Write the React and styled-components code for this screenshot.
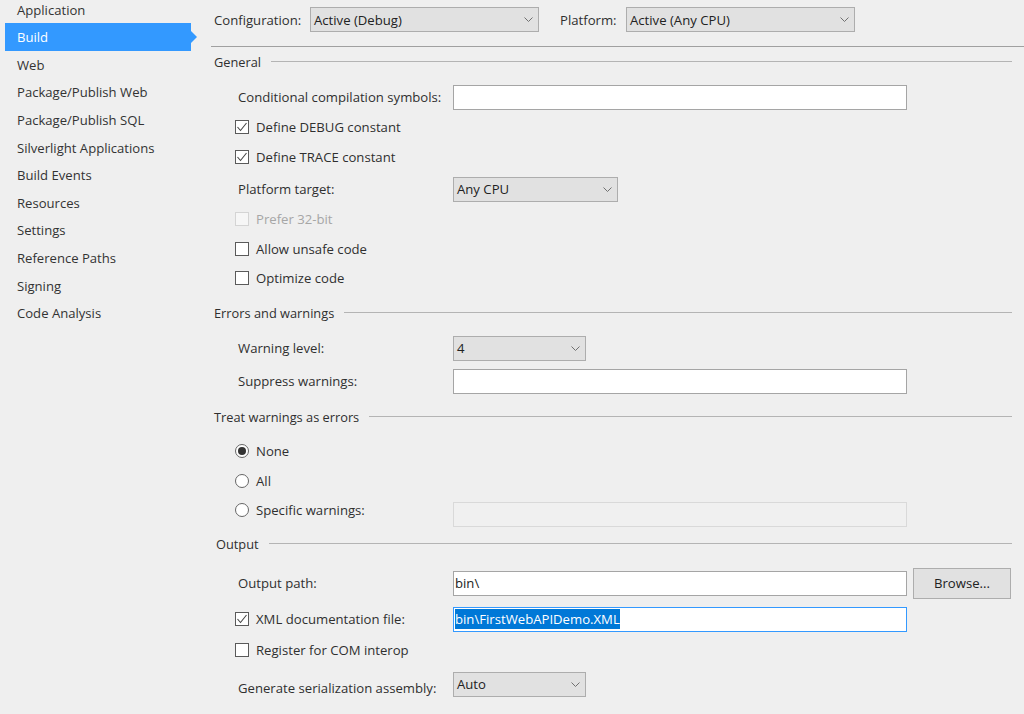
import React from 'react'
import styled, { createGlobalStyle } from 'styled-components'

const GlobalStyle = createGlobalStyle`
  html, body { margin: 0; padding: 0; background: #efefef; overflow: hidden; }
  body { font-family: "Open Sans", "Noto Sans", sans-serif; font-size: 13.15px; color: #2f2f2f; }
`

const Page = styled.div`
  display: flex;
  width: 1024px;
  height: 714px;
  overflow: hidden;
  background: #efefef;
`
const Sidebar = styled.nav`
  width: 211px;
  flex: none;
  padding: 0 0 0 5px;
  box-sizing: border-box;
  margin-top: -4.4px;
`
const NavItem = styled.div`
  position: relative;
  width: 186px;
  height: 27.6px;
  line-height: 29.4px;
  padding-left: 12px;
  box-sizing: border-box;
  font-size: 13.1px;
  background: ${p => (p.$active ? '#3399ff' : 'transparent')};
  color: ${p => (p.$active ? '#fff' : '#333')};
  ${p => p.$active && `
    &::after {
      content: '';
      position: absolute;
      left: 186px;
      top: 8px;
      border-left: 6px solid #3399ff;
      border-top: 6px solid transparent;
      border-bottom: 6px solid transparent;
    }
  `}
`
const Main = styled.main`
  flex: 1;
  min-width: 0;
`
const Toolbar = styled.div`
  display: flex;
  align-items: center;
  height: 47px;
  padding: 0 0 7px 3px;
  box-sizing: border-box;
  border-bottom: 1px solid #a0a0a0;
`
const ToolLabel = styled.span`
  width: ${p => p.$w}px;
  flex: none;
  margin-left: ${p => p.$ml || 0}px;
`
const SelectBox = styled.div`
  display: flex;
  align-items: center;
  justify-content: space-between;
  width: ${p => p.$w}px;
  height: 25px;
  margin-bottom: ${p => p.$lift || 0}px;
  padding: 0 5px 0 3px;
  box-sizing: border-box;
  background: #e1e1e1;
  border: 1px solid #adadad;
  color: #222;
  flex: none;
`
const Chevron = styled.svg`
  width: 9px;
  height: 5px;
  flex: none;
  fill: none;
  stroke: #707070;
  stroke-width: 1;
`
const SectionHead = styled.div`
  display: flex;
  align-items: center;
  height: 30px;
  margin-top: ${p => p.$gap || 0}px;
  padding-left: ${p => p.$indent || 3}px;
  width: 801px;
  box-sizing: border-box;
  font-size: 12.8px;
  &::after {
    content: '';
    flex: 1;
    height: 1px;
    margin-left: 10px;
    margin-top: -2px;
    background: #b4b4b4;
  }
`
const Row = styled.div`
  display: grid;
  grid-template-columns: 242px auto;
  grid-template-rows: 30px;
  align-items: center;
  height: 30px;
  margin-top: ${p => p.$gap || 0}px;
  color: ${p => (p.$muted ? '#a6a6a6' : 'inherit')};
`
const Label = styled.span`
  padding-left: 27px;
`
const CheckLabel = styled.span`
  display: flex;
  align-items: center;
  gap: 7px;
  padding-left: 24px;
  padding-bottom: ${p => p.$lift || 0}px;
  white-space: nowrap;
`
const CheckBox = styled.span`
  display: flex;
  align-items: center;
  justify-content: center;
  width: 14px;
  height: 14px;
  box-sizing: border-box;
  flex: none;
  background: ${p => (p.$disabled ? '#f6f6f6' : '#fff')};
  border: 1px solid ${p => (p.$disabled ? '#d4d4d4' : '#5a5a5a')};
`
const RadioDot = styled.span`
  display: flex;
  align-items: center;
  justify-content: center;
  width: 14px;
  height: 14px;
  box-sizing: border-box;
  flex: none;
  border-radius: 50%;
  background: #fff;
  border: 1px solid #666;
  &::after {
    content: '';
    display: ${p => (p.$on ? 'block' : 'none')};
    width: 8px;
    height: 8px;
    border-radius: 50%;
    background: #333;
  }
`
const TextField = styled.div`
  display: flex;
  align-items: center;
  width: 454px;
  height: 25px;
  padding-left: 1px;
  box-sizing: border-box;
  background: ${p => (p.$disabled ? '#f0f0f0' : '#fff')};
  border: 1px solid ${p => (p.$focus ? '#3399ff' : p.$disabled ? '#d9d9d9' : '#a5a5a5')};
  color: #222;
`
const Selected = styled.span`
  line-height: 20px;
  background: #0078d7;
  color: #fff;
`
const FieldGroup = styled.div`
  display: flex;
  align-items: center;
  gap: 6px;
`
const BrowseButton = styled.button`
  width: 98px;
  height: 31px;
  padding: 0;
  font: inherit;
  color: #222;
  background: #e1e1e1;
  border: 1px solid #adadad;
`

const navItems = ['Application', 'Build', 'Web', 'Package/Publish Web', 'Package/Publish SQL', 'Silverlight Applications', 'Build Events', 'Resources', 'Settings', 'Reference Paths', 'Signing', 'Code Analysis']

const Select = ({ w, lift, children }) => (
  <SelectBox $w={w} $lift={lift}>
    {children}
    <Chevron viewBox="0 0 9 5"><polyline points="0.5,0.5 4.5,4.5 8.5,0.5" /></Chevron>
  </SelectBox>
)

const Check = ({ checked, disabled, children }) => (
  <CheckLabel>
    <CheckBox $disabled={disabled}>
      {checked && (
        <svg width="12" height="12" viewBox="0 0 12 12" fill="none" stroke="#444" strokeWidth="1.1">
          <polyline points="1.5,6 4.5,9.5 10.5,2" />
        </svg>
      )}
    </CheckBox>
    {children}
  </CheckLabel>
)

const Radio = ({ on, lift, children }) => (
  <CheckLabel $lift={lift}>
    <RadioDot $on={on} />
    {children}
  </CheckLabel>
)

export default function App() {
  return (
    <Page>
      <GlobalStyle />
      <Sidebar>
        {navItems.map(item => (
          <NavItem key={item} $active={item === 'Build'}>{item}</NavItem>
        ))}
      </Sidebar>
      <Main>
        <Toolbar>
          <ToolLabel $w={96}>Configuration:</ToolLabel>
          <Select w={229}>Active (Debug)</Select>
          <ToolLabel $w={66} $ml={21}>Platform:</ToolLabel>
          <Select w={229}>Active (Any CPU)</Select>
        </Toolbar>

        <SectionHead>General</SectionHead>
        <Row $gap={5}><Label>Conditional compilation symbols:</Label><TextField /></Row>
        <Row><Check checked>Define DEBUG constant</Check></Row>
        <Row><Check checked>Define TRACE constant</Check></Row>
        <Row $gap={2}><Label>Platform target:</Label><Select w={165}>Any CPU</Select></Row>
        <Row $muted><Check disabled>Prefer 32-bit</Check></Row>
        <Row><Check>Allow unsafe code</Check></Row>
        <Row $gap={-1}><Check>Optimize code</Check></Row>

        <SectionHead $gap={5}>Errors and warnings</SectionHead>
        <Row $gap={5}><Label>Warning level:</Label><Select w={133}>4</Select></Row>
        <Row $gap={3}><Label>Suppress warnings:</Label><TextField /></Row>

        <SectionHead $gap={6}>Treat warnings as errors</SectionHead>
        <Row $gap={4}><Radio on>None</Radio></Row>
        <Row><Radio>All</Radio></Row>
        <Row $gap={3}><Radio lift={8}>Specific warnings:</Radio><TextField $disabled /></Row>

        <SectionHead $indent={5}>Output</SectionHead>
        <Row $gap={9}>
          <Label>Output path:</Label>
          <FieldGroup><TextField>bin\</TextField><BrowseButton>Browse...</BrowseButton></FieldGroup>
        </Row>
        <Row $gap={6}>
          <Check checked>XML documentation file:</Check>
          <TextField $focus><Selected>bin\FirstWebAPIDemo.XML</Selected></TextField>
        </Row>
        <Row $gap={1}><Check>Register for COM interop</Check></Row>
        <Row $gap={8}><Label>Generate serialization assembly:</Label><Select w={133} lift={8}>Auto</Select></Row>
      </Main>
    </Page>
  )
}
